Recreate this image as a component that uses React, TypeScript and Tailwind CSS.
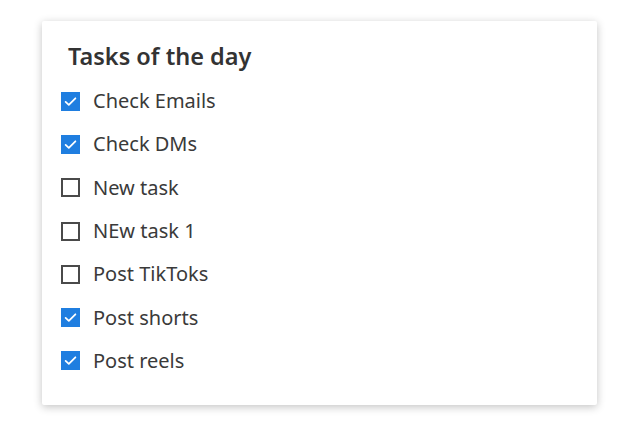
const tasks = [
  { label: "Check Emails", done: true },
  { label: "Check DMs", done: true },
  { label: "New task", done: false },
  { label: "NEw task 1", done: false },
  { label: "Post TikToks", done: false },
  { label: "Post shorts", done: true },
  { label: "Post reels", done: true },
];

function Box({ checked }: { checked: boolean }) {
  if (checked) {
    return (
      <span className="w-[19px] h-[19px] bg-[#1f7ee0] flex items-center justify-center shrink-0">
        <svg width="15" height="15" viewBox="0 0 16 16" fill="none">
          <path d="M2.8 8.4l3.4 3.2L13.2 4.6" stroke="white" strokeWidth="1.9" strokeLinecap="round" strokeLinejoin="round" />
        </svg>
      </span>
    );
  }
  return <span className="w-[19px] h-[19px] border-2 border-[#4a4a4a] bg-white shrink-0" />;
}

export default function App() {
  return (
    <div className="w-[640px] h-[427px] bg-white pt-[21px] pl-[42px] font-['Noto_Sans',sans-serif]">
      <div className="w-[555px] h-[384px] bg-white rounded-[2px] shadow-[0_2px_8px_rgba(0,0,0,0.24)] pt-[17px] pl-[19px]">
        <h2 className="ml-[7px] text-[23.5px] leading-[36px] font-semibold text-[#333333]">Tasks of the day</h2>
        <ul className="mt-[5.5px] flex flex-col">
          {tasks.map((t) => (
            <li key={t.label} className="flex items-center gap-[13px] h-[43.3px]">
              <Box checked={t.done} />
              <span className="text-[20px] text-[#3a3a3a]">{t.label}</span>
            </li>
          ))}
        </ul>
      </div>
    </div>
  );
}
